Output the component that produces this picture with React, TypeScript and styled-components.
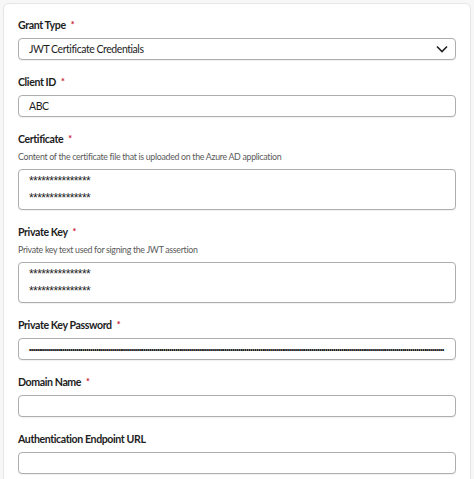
import React from "react"
import styled, { createGlobalStyle } from "styled-components"

const GlobalStyle = createGlobalStyle`
	html, body {
		margin: 0;
		padding: 0;
		background: #f7f7f7;
	}
	body {
		font-family: Lato, "Liberation Sans", sans-serif;
		color: #1f1f1f;
	}
`

const Page = styled.div`
	padding: 3px 3px 0 3px;
	height: 476px;
	overflow: hidden;
`

const Card = styled.div`
	background: #ffffff;
	border: 1px solid #e6e6e6;
	border-radius: 6px;
	padding: 13px 14px 20px 14px;
	display: flex;
	flex-direction: column;
	gap: 14px;
`

const Field = styled.div`
	display: flex;
	flex-direction: column;
`

const Label = styled.label<{ $hasHelp?: boolean }>`
	font-size: 10.6px;
	font-weight: 700;
	letter-spacing: -0.4px;
	line-height: 16px;
	height: 16px;
	margin-bottom: ${(props) => (props.$hasHelp ? "3px" : "5px")};
	color: #1d1d1d;
`

const Required = styled.span`
	color: #c8102e;
	font-size: 9px;
	margin-left: 5px;
	vertical-align: 1px;
`

const Help = styled.div`
	font-size: 8.8px;
	letter-spacing: -0.3px;
	line-height: 14px;
	color: #5a5a5a;
	margin-bottom: 5px;
`

const Box = styled.div`
	box-sizing: border-box;
	height: 22px;
	border: 1px solid #aeaeae;
	border-radius: 4px;
	background: #fff;
	box-shadow: 0 1px 1px rgba(0, 0, 0, 0.06);
	display: flex;
	align-items: center;
	padding: 0 10px;
	font-size: 10.5px;
	letter-spacing: -0.45px;
	color: #1d1d1d;
`

const SelectBox = styled(Box)`
	justify-content: space-between;
	padding-right: 6px;
`

const TextArea = styled(Box)`
	height: 41px;
	flex-direction: column;
	align-items: flex-start;
	justify-content: flex-start;
	padding-top: 3px;
	font-family: "Liberation Sans", sans-serif;
	font-size: 12px;
	line-height: 17px;
	letter-spacing: -0.6px;
`

const Dots = styled.span`
	white-space: nowrap;
	font-family: "Liberation Sans", sans-serif;
	font-size: 6.5px;
	line-height: 8px;
	letter-spacing: -0.3px;
	margin-top: 2px;
	color: #000;
`

const Chevron = () => (
	<svg width="14" height="10" viewBox="0 0 14 10">
		<path d="M2 2.5 L7 7.5 L12 2.5" fill="none" stroke="#222" strokeWidth="1.6" />
	</svg>
)

const FieldLabel = ({ text, required, help }: { text: string; required?: boolean; help?: boolean }) => (
	<Label $hasHelp={help}>
		{text}
		{required && <Required>*</Required>}
	</Label>
)

const stars = "***************"

export default function App() {
	return (
		<>
			<GlobalStyle />
			<Page>
				<Card>
					<Field>
						<FieldLabel text="Grant Type" required />
						<SelectBox>
							<span>JWT Certificate Credentials</span>
							<Chevron />
						</SelectBox>
					</Field>
					<Field>
						<FieldLabel text="Client ID" required />
						<Box>ABC</Box>
					</Field>
					<Field>
						<FieldLabel text="Certificate" required help />
						<Help>Content of the certificate file that is uploaded on the Azure AD application</Help>
						<TextArea>
							<div>{stars}</div>
							<div>{stars}</div>
						</TextArea>
					</Field>
					<Field>
						<FieldLabel text="Private Key" required help />
						<Help>Private key text used for signing the JWT assertion</Help>
						<TextArea>
							<div>{stars}</div>
							<div>{stars}</div>
						</TextArea>
					</Field>
					<Field>
						<FieldLabel text="Private Key Password" required />
						<Box>
							<Dots>{"•".repeat(210)}</Dots>
						</Box>
					</Field>
					<Field>
						<FieldLabel text="Domain Name" required />
						<Box />
					</Field>
					<Field>
						<FieldLabel text="Authentication Endpoint URL" />
						<Box />
					</Field>
				</Card>
			</Page>
		</>
	)
}
